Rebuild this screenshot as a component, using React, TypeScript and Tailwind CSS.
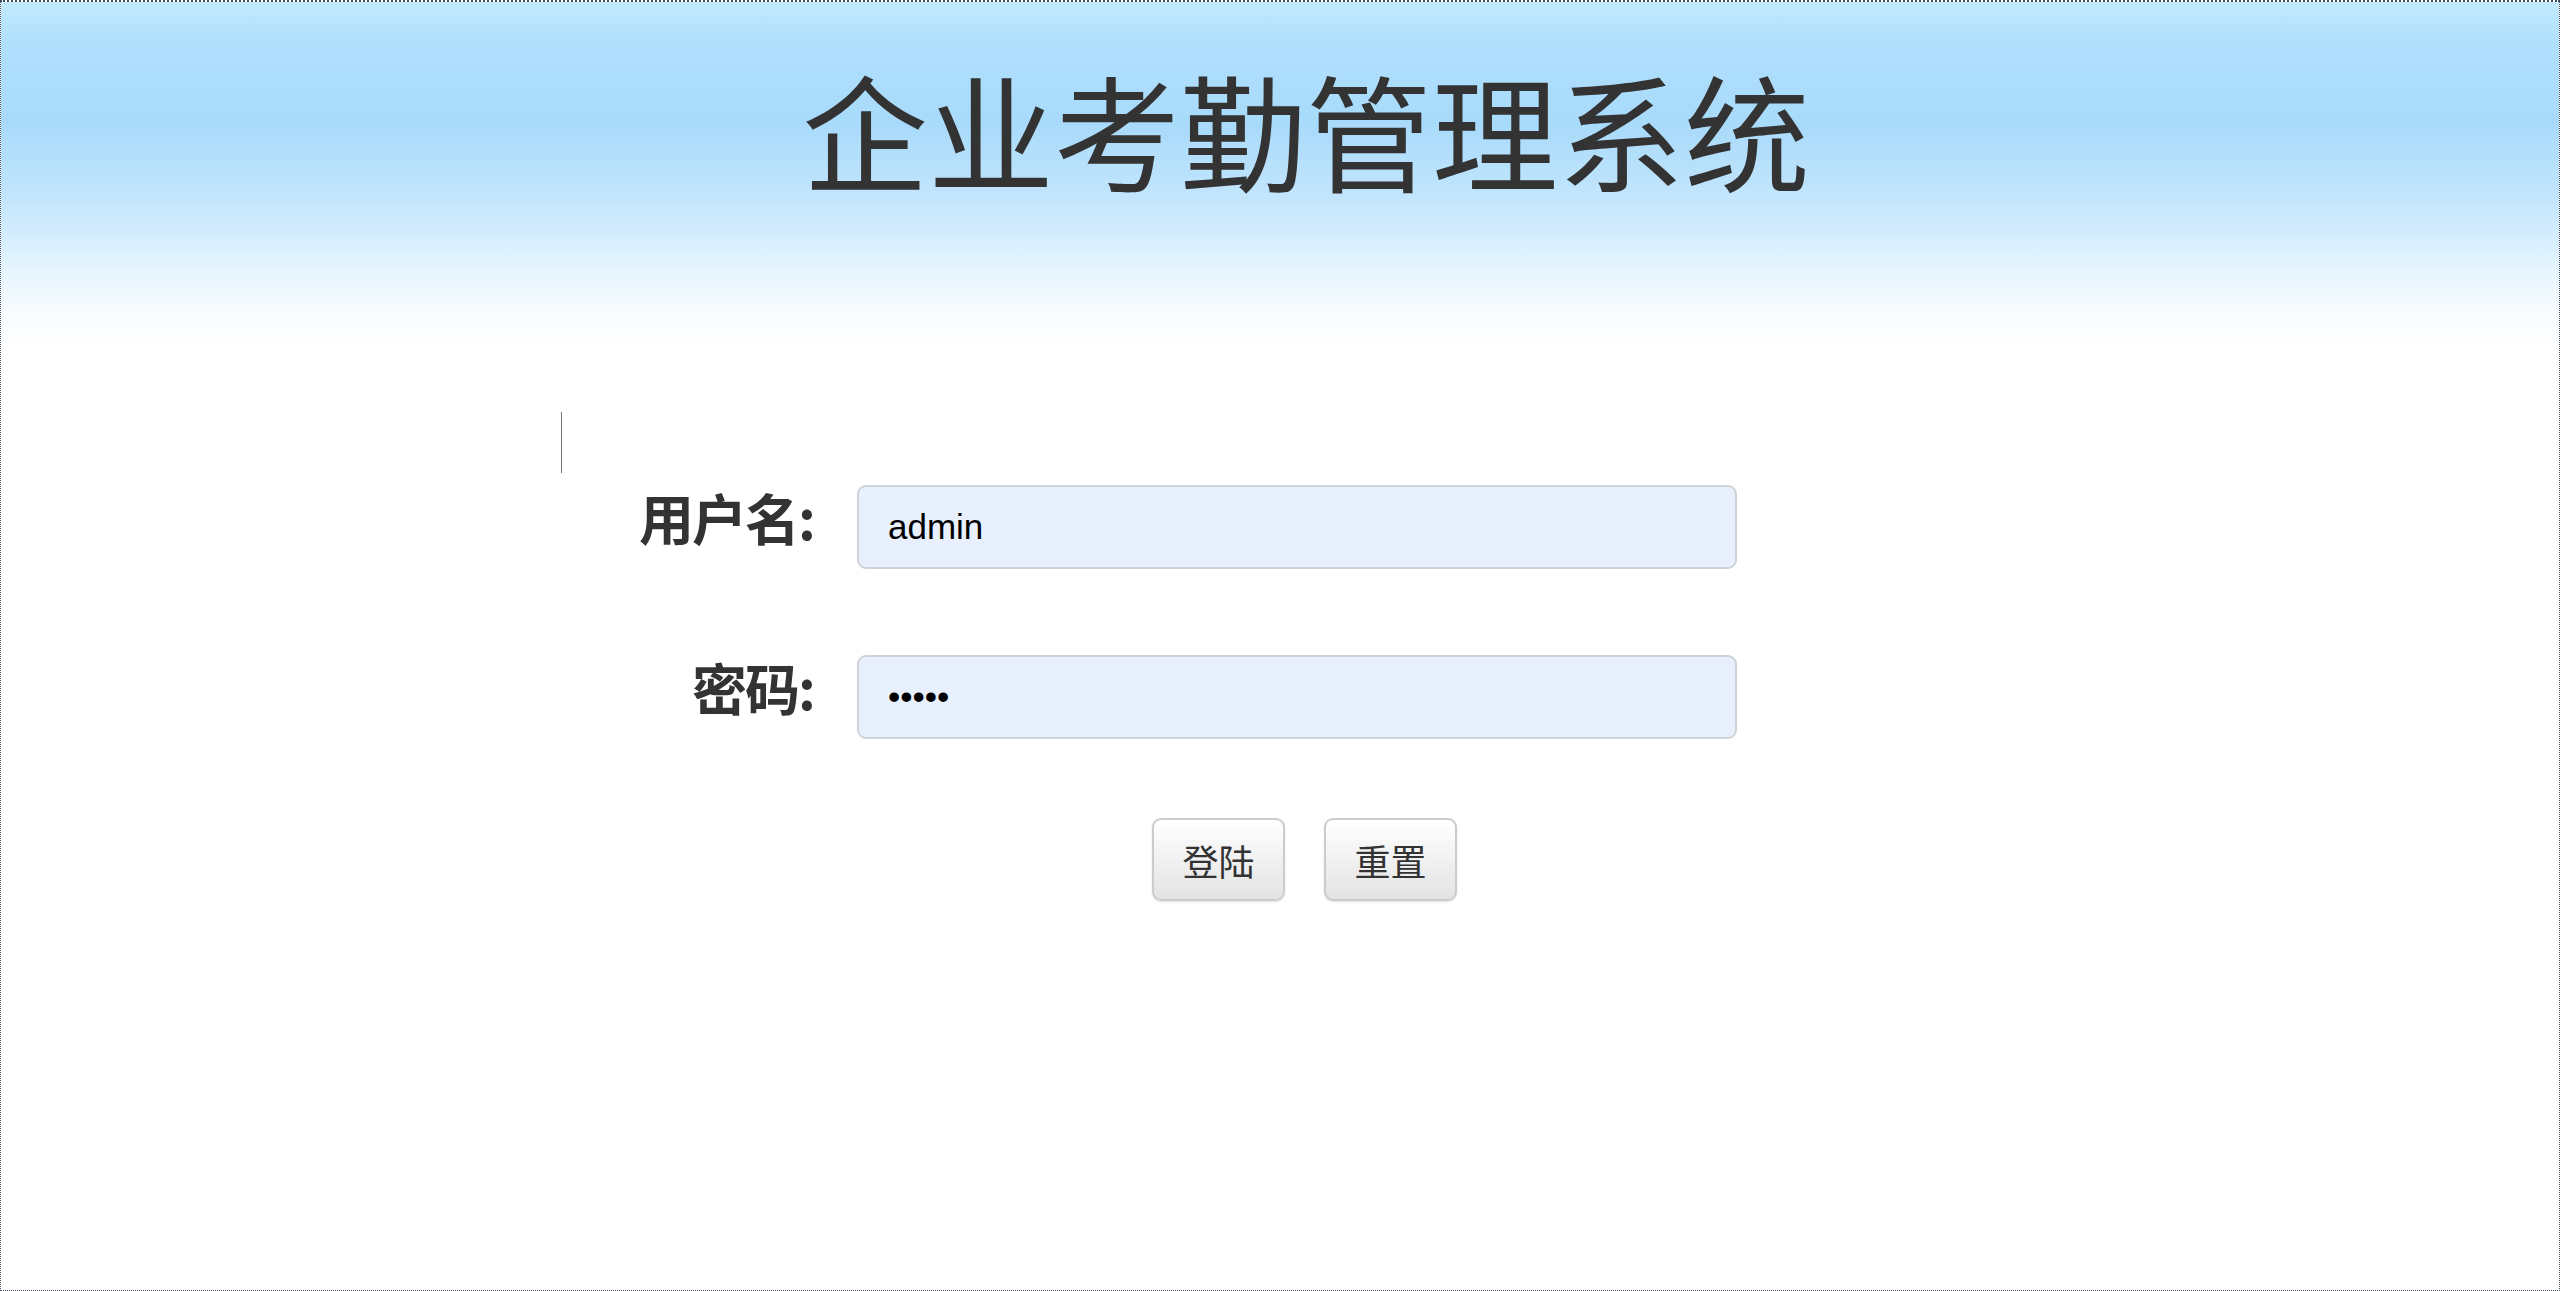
import { useState } from "react";

export default function App() {
    const [username, setUsername] = useState("admin");
    const [password, setPassword] = useState("admin");

    return (
        <div className="h-[1291px] w-full border border-t-2 border-dotted border-[#3f4a5c] bg-white overflow-hidden">
            <div className="h-full w-full bg-[linear-gradient(to_bottom,#c2e9fe_0px,#b0e0fd_40px,#a8dafb_120px,#c4e6fd_200px,#e6f5fe_270px,#f8fcff_310px,#ffffff_345px)] bg-no-repeat bg-[length:100%_360px]">
                <h1 className="pt-[63px] pl-[52px] text-center text-[126px] leading-none font-normal text-[#333333] font-['Noto_Sans_CJK_SC','Noto_Sans',sans-serif]">
                    企业考勤管理系统
                </h1>

                <div className="w-[1600px] mx-auto">
                    <div className="ml-[81px] mt-[221px] w-px h-[61px] bg-[#777777]"></div>

                    <form className="mt-[12px] flex flex-col gap-[86px]" onSubmit={(e) => e.preventDefault()}>
                        <div className="flex items-start gap-[43px]">
                            <label className="w-[334px] mt-[4px] text-right text-[55px] leading-none font-bold tracking-[-2px] text-[#333333] font-['Noto_Sans_CJK_SC',sans-serif]">
                                用户名:
                            </label>
                            <input
                                type="text"
                                value={username}
                                onChange={(e) => setUsername(e.target.value)}
                                className="w-[880px] h-[84px] rounded-[9px] border-2 border-[#cfd3d8] bg-[#e8f0fe] pl-[29px] text-[35px] text-black font-['Liberation_Sans',Arial,sans-serif] outline-none"
                            />
                        </div>
                        <div className="flex items-start gap-[43px]">
                            <label className="w-[334px] mt-[4px] text-right text-[55px] leading-none font-bold tracking-[-2px] text-[#333333] font-['Noto_Sans_CJK_SC',sans-serif]">
                                密码:
                            </label>
                            <input
                                type="password"
                                value={password}
                                onChange={(e) => setPassword(e.target.value)}
                                className="w-[880px] h-[84px] rounded-[9px] border-2 border-[#cfd3d8] bg-[#e8f0fe] pl-[29px] text-[35px] text-black font-['Liberation_Sans',Arial,sans-serif] outline-none"
                            />
                        </div>
                    </form>

                    <div className="mt-[79px] ml-[672px] flex gap-[39px]">
                        <button className="w-[133px] h-[83px] rounded-[9px] border-2 border-[#cccccc] bg-gradient-to-b from-white to-[#e3e3e3] shadow-[0_1px_2px_rgba(0,0,0,0.12)] text-[36px] text-[#333333] font-['Noto_Sans_CJK_SC',sans-serif]">
                            登陆
                        </button>
                        <button
                            className="w-[133px] h-[83px] rounded-[9px] border-2 border-[#cccccc] bg-gradient-to-b from-white to-[#e3e3e3] shadow-[0_1px_2px_rgba(0,0,0,0.12)] text-[36px] text-[#333333] font-['Noto_Sans_CJK_SC',sans-serif]"
                            onClick={() => {
                                setUsername("");
                                setPassword("");
                            }}
                        >
                            重置
                        </button>
                    </div>
                </div>
            </div>
        </div>
    );
}
